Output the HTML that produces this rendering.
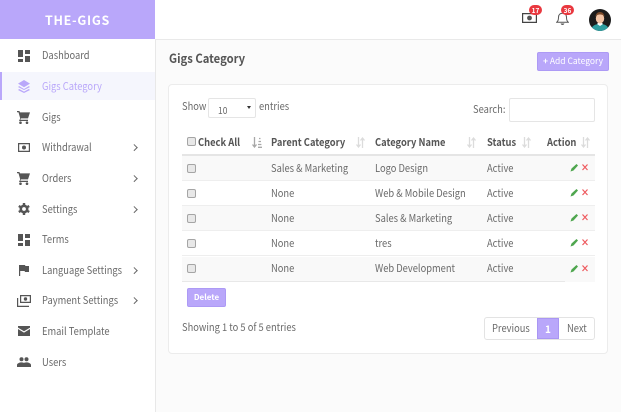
<!DOCTYPE html>
<html><head><meta charset="utf-8"><style>
*{box-sizing:border-box}
html,body{margin:0;padding:0;width:621px;height:412px;overflow:hidden;background:#fbfbfb;font-family:"Noto Sans CJK JP","Liberation Sans",sans-serif;color:#666;font-size:10.5px}
.a{position:absolute;white-space:nowrap}
svg{position:absolute;display:block}
.m,.td,.th{transform:scaleX(.89);transform-origin:left center}
.m{position:absolute;left:42px;white-space:nowrap;font-size:10.5px;color:#6a6a6a;line-height:14px}
.ch{position:absolute;left:132px;width:4.500px;height:4.500px;border-top:1.200px solid #666;border-right:1.200px solid #666;transform:rotate(45deg)}
.th{position:absolute;top:136px;font-weight:bold;font-size:10.5px;color:#555;line-height:14px;white-space:nowrap}
.td{position:absolute;font-size:10.5px;color:#6a6a6a;line-height:14px;white-space:nowrap}
.cb{position:absolute;left:187px;width:8.500px;height:8.500px;border:1px solid #a5a5a5;border-radius:2px;background:#e8e8e8}
.row{position:absolute;left:182px;width:413px;height:25px;border-bottom:1px solid #eee}
</style></head><body>
<div class="a" style="left:0;top:0;width:156px;height:412px;background:#fff;border-right:1px solid #e8e8e8"></div>
<div class="a" style="left:155px;top:0;width:466px;height:40px;background:#fff;border-bottom:1px solid #e9e9e9"></div>
<div class="a" style="left:0;top:0;width:155px;height:39px;background:#b9a7fa;color:#fff;font-weight:bold;font-size:12.5px;letter-spacing:.7px;line-height:39px;text-align:center">THE-GIGS</div>
<div class="a" style="left:0;top:72px;width:155px;height:28px;background:#f5f6fd;border-left:2px solid #b9a7fa"></div>

<svg style="left:18px;top:50px" width="12" height="12" viewBox="0 0 12 12" fill="#555"><path d="M0 0h5v7H0zM7 0h5v4H7zM7 6h5v6H7zM0 9h5v3H0z"/></svg>
<div class="m" style="top:49px">Dashboard</div>
<svg style="left:18px;top:80px" width="12" height="13" viewBox="0 0 12 13" fill="#b9a7fa"><path d="M6 0l6 3.600L6 7.200 0 3.600zM1.200 6.100L6 9l4.800-2.900L12 7l-6 3L0 7zM1.200 9L6 11.600 10.800 9l1.200 1-6 3-6-3z"/></svg>
<div class="m" style="top:80px;color:#b9a7fa">Gigs Category</div>
<svg style="left:17px;top:111px" width="13" height="13" viewBox="0 0 13 13" fill="#555"><path d="M0 0h2.400l.6 1.400H13l-2 6H4l-.7 1.300H11V10H2l1.200-2.600L1.500 1.300H0z"/><circle cx="3.500" cy="11.700" r="1.300"/><circle cx="10" cy="11.700" r="1.300"/></svg>
<div class="m" style="top:111px">Gigs</div>
<svg style="left:18px;top:143px" width="12" height="9" viewBox="0 0 12 9"><path fill="#555" fill-rule="evenodd" d="M0 0h12v9H0zM1.200 1.300v6.400h9.600V1.300z"/><circle cx="6" cy="4.500" r="2" fill="#555"/></svg>
<div class="m" style="top:141px">Withdrawal</div><div class="ch" style="top:145px"></div>
<svg style="left:17px;top:172px" width="13" height="13" viewBox="0 0 13 13" fill="#555"><path d="M0 0h2.400l.6 1.400H13l-2 6H4l-.7 1.300H11V10H2l1.200-2.600L1.500 1.300H0z"/><circle cx="3.500" cy="11.700" r="1.300"/><circle cx="10" cy="11.700" r="1.300"/></svg>
<div class="m" style="top:172px">Orders</div><div class="ch" style="top:176px"></div>
<svg style="left:18px;top:203px" width="12" height="12" viewBox="0 0 12 12"><circle cx="6" cy="6" r="3.200" fill="none" stroke="#555" stroke-width="2.600"/><path stroke="#555" stroke-width="2.400" d="M6 0v2M6 10v2M.8 3l1.700 1M9.500 8l1.700 1M.8 9l1.700-1M9.500 4l1.700-1"/></svg>
<div class="m" style="top:203px">Settings</div><div class="ch" style="top:207px"></div>
<svg style="left:18px;top:234px" width="12" height="12" viewBox="0 0 12 12" fill="#555"><path d="M0 0h5v7H0zM7 0h5v4H7zM7 6h5v6H7zM0 9h5v3H0z"/></svg>
<div class="m" style="top:233px">Terms</div>
<svg style="left:19px;top:265px" width="10" height="11" viewBox="0 0 10 11" fill="#555"><path d="M0 0h6l.4 1H10v6H6l-.4-1H1.200v5H0z"/></svg>
<div class="m" style="top:264px">Language Settings</div><div class="ch" style="top:268px"></div>
<svg style="left:17px;top:295px" width="14" height="12" viewBox="0 0 14 12"><path fill="#555" fill-rule="evenodd" d="M3 0h11v8H3zM4.200 1.200v5.600h8.600V1.200z"/><circle cx="8.500" cy="4" r="1.700" fill="#555"/><path fill="#555" d="M0 3h1.200v7.800H12V12H0z"/></svg>
<div class="m" style="top:294px">Payment Settings</div><div class="ch" style="top:298px"></div>
<svg style="left:18px;top:326px" width="12" height="10" viewBox="0 0 12 10" fill="#555"><path d="M0 0h12v1.600L6 5.200 0 1.600zM0 3l6 3.600L12 3v7H0z"/></svg>
<div class="m" style="top:325px">Email Template</div>
<svg style="left:17px;top:357px" width="14" height="10" viewBox="0 0 14 10" fill="#555"><circle cx="4.500" cy="2.200" r="2"/><circle cx="9.500" cy="2.200" r="2"/><path d="M0 10V8c0-1.600 2.600-2.600 4.500-2.600S7 6 7 6s.6-.6 2.500-.6S14 6.400 14 8v2z"/></svg>
<div class="m" style="top:356px">Users</div>

<svg style="left:522px;top:13px" width="15" height="10" viewBox="0 0 15 10"><path fill="#444" fill-rule="evenodd" d="M0 0h15v10H0zM1.200 1.200v7.600h12.600V1.200z"/><circle cx="7.500" cy="5" r="2.400" fill="#555"/></svg>
<div class="a" style="left:529px;top:5px;width:13px;height:10px;border-radius:5px;background:#e9383f;color:#fff;font-size:6.500px;font-weight:bold;line-height:10px;text-align:center">17</div>
<svg style="left:556px;top:11px" width="13" height="14" viewBox="0 0 13 14" fill="none" stroke="#555"><path d="M.8 11.200c1.500-1.200 1.700-2.500 1.700-5 0-2.500 1.700-4 4-4s4 1.500 4 4c0 2.500.2 3.800 1.700 5z"/><path d="M5 12.500c.5 1.300 2.500 1.300 3 0" fill="#555"/></svg>
<div class="a" style="left:561px;top:5px;width:13px;height:10px;border-radius:5px;background:#e9383f;color:#fff;font-size:6.500px;font-weight:bold;line-height:10px;text-align:center">36</div>
<svg style="left:589px;top:9px" width="22" height="22" viewBox="0 0 22 22"><circle cx="11" cy="11" r="11" fill="#1c1c1c"/><clipPath id="k"><circle cx="11" cy="11" r="11"/></clipPath><g clip-path="url(#k)"><path fill="#2f9ea0" d="M2 22c0-5 4-7 9-7s9 2 9 7z"/><path fill="#fff" d="M8 15l3 2 3-2-1-1H9z"/><ellipse cx="11" cy="9.500" rx="4.200" ry="5" fill="#f3c5a6"/><path fill="#7a4a2a" d="M6.500 8c0-3 2-5 4.500-5s4.500 2 4.500 5c-1-2-2.500-2.500-4.500-2.500S7.500 6 6.500 8z"/></g></svg>

<div class="a" style="left:169px;top:50px;font-size:12.500px;font-weight:bold;color:#555;line-height:16px;transform:scaleX(.9);transform-origin:left center">Gigs Category</div>
<div class="a" style="left:537px;top:52px;width:72px;height:19px;background:#b9a7fa;border:1px solid #ad9af5;border-radius:2px;color:#fff;font-size:8.500px;line-height:17px;text-align:center"><b>+</b> Add Category</div>

<div class="a" style="left:168px;top:84px;width:440px;height:270px;background:#fff;border:1px solid #ececec;border-radius:4px"></div>
<div class="td" style="left:182px;top:100px">Show</div>
<div class="a" style="left:208px;top:98px;width:48px;height:20px;border:1px solid #e5e5e5;border-radius:2px;background:#fff"></div>
<div class="td" style="left:218px;top:103px;font-size:9.500px">10</div>
<div class="a" style="left:247px;top:106px;width:0;height:0;border:2.500px solid transparent;border-top:3px solid #333"></div>
<div class="td" style="left:259px;top:100px">entries</div>
<div class="td" style="left:473px;top:103px">Search:</div>
<div class="a" style="left:509px;top:98px;width:86px;height:24px;border:1px solid #e5e5e5;border-radius:2px;background:#fff"></div>

<div class="cb" style="top:137px"></div>
<div class="th" style="left:198px">Check All</div>
<div class="th" style="left:271px">Parent Category</div>
<div class="th" style="left:375px">Category Name</div>
<div class="th" style="left:487px">Status</div>
<div class="th" style="left:547px">Action</div>
<svg style="left:252px;top:137px" width="10" height="11" viewBox="0 0 10 11" fill="none" stroke="#a8a8a8" stroke-width="1.300"><path d="M2.500 0v10M.5 7.500l2 2.500 2-2.500M6 10.300h4M6 7.500h3.400M6.500 4.500H9M7 1.500h1.500"/></svg>
<svg style="left:356px;top:137px" width="9" height="11" viewBox="0 0 9 11" fill="none" stroke="#dcdcdc" stroke-width="1.300"><path d="M2.500 0v10M.5 7.500l2 2.500 2-2.500M6.500 11V1M4.500 3.500l2-2.500 2 2.500"/></svg>
<svg style="left:467px;top:137px" width="9" height="11" viewBox="0 0 9 11" fill="none" stroke="#dcdcdc" stroke-width="1.300"><path d="M2.500 0v10M.5 7.500l2 2.500 2-2.500M6.500 11V1M4.500 3.500l2-2.500 2 2.500"/></svg>
<svg style="left:522px;top:137px" width="9" height="11" viewBox="0 0 9 11" fill="none" stroke="#dcdcdc" stroke-width="1.300"><path d="M2.500 0v10M.5 7.500l2 2.500 2-2.500M6.500 11V1M4.500 3.500l2-2.500 2 2.500"/></svg>
<svg style="left:581px;top:137px" width="9" height="11" viewBox="0 0 9 11" fill="none" stroke="#dcdcdc" stroke-width="1.300"><path d="M2.500 0v10M.5 7.500l2 2.500 2-2.500M6.500 11V1M4.500 3.500l2-2.500 2 2.500"/></svg>
<div class="a" style="left:182px;top:154px;width:413px;height:2px;background:#e5e5e5"></div>

<div class="row" style="top:156px;background:#f9f9f9"></div>
<div class="row" style="top:181px"></div>
<div class="row" style="top:206px;background:#f9f9f9"></div>
<div class="row" style="top:231px"></div>
<div class="row" style="top:257px;background:#f9f9f9;border-bottom:0"></div>
<div class="a" style="left:182px;top:281px;width:383px;height:1px;background:#e8e8e8"></div>

<div class="cb" style="top:164px"></div><div class="td" style="left:271px;top:162px">Sales &amp; Marketing</div><div class="td" style="left:375px;top:162px">Logo Design</div><div class="td" style="left:487px;top:162px">Active</div>
<div class="cb" style="top:189px"></div><div class="td" style="left:271px;top:187px">None</div><div class="td" style="left:375px;top:187px">Web &amp; Mobile Design</div><div class="td" style="left:487px;top:187px">Active</div>
<div class="cb" style="top:214px"></div><div class="td" style="left:271px;top:212px">None</div><div class="td" style="left:375px;top:212px">Sales &amp; Marketing</div><div class="td" style="left:487px;top:212px">Active</div>
<div class="cb" style="top:239px"></div><div class="td" style="left:271px;top:237px">None</div><div class="td" style="left:375px;top:237px">tres</div><div class="td" style="left:487px;top:237px">Active</div>
<div class="cb" style="top:264px"></div><div class="td" style="left:271px;top:262px">None</div><div class="td" style="left:375px;top:262px">Web Development</div><div class="td" style="left:487px;top:262px">Active</div>

<svg style="left:570px;top:163px" width="20" height="9" viewBox="0 0 20 9"><path d="M.5 8.500l1-3L6.500 1 8 2.500 3.500 7.500z" fill="#4ea64e"/><path d="M12.500 1.500l5 5.500M17.500 1.500l-5 5.500" stroke="#ee5a5f" stroke-width="1.200"/></svg>
<svg style="left:570px;top:188px" width="20" height="9" viewBox="0 0 20 9"><path d="M.5 8.500l1-3L6.500 1 8 2.500 3.500 7.500z" fill="#4ea64e"/><path d="M12.500 1.500l5 5.500M17.500 1.500l-5 5.500" stroke="#ee5a5f" stroke-width="1.200"/></svg>
<svg style="left:570px;top:213px" width="20" height="9" viewBox="0 0 20 9"><path d="M.5 8.500l1-3L6.500 1 8 2.500 3.500 7.500z" fill="#4ea64e"/><path d="M12.500 1.500l5 5.500M17.500 1.500l-5 5.500" stroke="#ee5a5f" stroke-width="1.200"/></svg>
<svg style="left:570px;top:238px" width="20" height="9" viewBox="0 0 20 9"><path d="M.5 8.500l1-3L6.500 1 8 2.500 3.500 7.500z" fill="#4ea64e"/><path d="M12.500 1.500l5 5.500M17.500 1.500l-5 5.500" stroke="#ee5a5f" stroke-width="1.200"/></svg>
<svg style="left:570px;top:264px" width="20" height="9" viewBox="0 0 20 9"><path d="M.5 8.500l1-3L6.500 1 8 2.500 3.500 7.500z" fill="#4ea64e"/><path d="M12.500 1.500l5 5.500M17.500 1.500l-5 5.500" stroke="#ee5a5f" stroke-width="1.200"/></svg>

<div class="a" style="left:187px;top:288px;width:39px;height:19px;background:#b9a7fa;border:1px solid #ad9af5;border-radius:2px;color:#fff;font-size:8px;font-weight:bold;line-height:17px;text-align:center">Delete</div>
<div class="td" style="left:182px;top:321px">Showing 1 to 5 of 5 entries</div>

<div class="a" style="left:484px;top:317px;width:111px;height:23px;border:1px solid #e3e3e3;border-radius:3px;background:#fff"></div>
<div class="td" style="left:492px;top:322px">Previous</div>
<div class="a" style="left:537px;top:318px;width:22px;height:21px;background:#b9a7fa;border:1px solid #a996f3;color:#fff;font-size:10px;line-height:19px;text-align:center;font-weight:bold">1</div>
<div class="td" style="left:567px;top:322px">Next</div>
</body></html>
